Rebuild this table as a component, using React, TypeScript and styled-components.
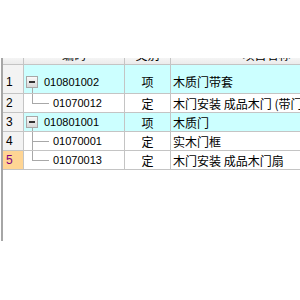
import styled, { createGlobalStyle } from "styled-components";

interface Item {
  code: string;
  kind: string;
  name: string;
  parent?: boolean;
  last?: boolean;
  tall?: boolean;
}

const rows: Item[] = [
  { code: "010801002", kind: "项", name: "木质门带套", parent: true, tall: true },
  { code: "01070012", kind: "定", name: "木门安装 成品木门 (带门套)", last: true },
  { code: "010801001", kind: "项", name: "木质门", parent: true },
  { code: "01070001", kind: "定", name: "实木门框" },
  { code: "01070013", kind: "定", name: "木门安装 成品木门扇", last: true },
];

const Global = createGlobalStyle`
  html, body {
    margin: 0;
    background: #ffffff;
  }
  body {
    font-family: "Liberation Sans", "Noto Sans CJK SC", sans-serif;
    font-size: 12px;
    color: #000;
  }
`;

const Page = styled.div`
  width: 300px;
  height: 300px;
  padding-top: 58px;
  box-sizing: border-box;
  overflow: hidden;
`;

const Grid = styled.div`
  margin-left: 1px;
  height: 183px;
  border-left: 2px solid #a6a6a6;
  width: 420px;
`;

const Row = styled.div<{ $h: number; $pad?: number }>`
  display: grid;
  grid-template-columns: 21px 101px 46px 192px;
  height: ${(p) => p.$h}px;
  & > * {
    padding-top: ${(p) => p.$pad ?? 0}px;
  }
`;

// header is scrolled up, only the bottom strip of it shows
const HeadCell = styled.div`
  background: linear-gradient(#f4f4f4, #ebebeb);
  border-right: 1px solid #c4c4c4;
  border-bottom: 1px solid #c4c4c4;
  overflow: hidden;
  text-align: center;
  font-family: "Noto Sans CJK SC", sans-serif;
  span {
    display: block;
    line-height: 14px;
    margin-top: -10px;
  }
`;

const NumCell = styled.div<{ $sel?: boolean }>`
  background: ${(p) => (p.$sel ? "#ffd594" : "#f3f3f3")};
  color: ${(p) => (p.$sel ? "#800080" : "#000")};
  border-right: 1px solid #c4c4c4;
  border-bottom: 1px solid #c4c4c4;
  display: flex;
  align-items: center;
  padding-left: 3px;
`;

const Cell = styled.div<{ $hi?: boolean; $center?: boolean }>`
  background: ${(p) => (p.$hi ? "#ccffff" : "#ffffff")};
  border-right: 1px solid #c4c4c4;
  border-bottom: 1px solid #c4c4c4;
  display: flex;
  align-items: center;
  justify-content: ${(p) => (p.$center ? "center" : "flex-start")};
  padding-left: ${(p) => (p.$center ? 0 : 2)}px;
  white-space: nowrap;
  overflow: hidden;
  font-family: "Noto Sans CJK SC", sans-serif;
`;

const CodeCell = styled(Cell)`
  align-items: stretch;
  padding-left: 2px;
  font-family: "Liberation Sans", sans-serif;
  font-size: 11px;
`;

const Code = styled.span`
  align-self: center;
`;

const Toggle = styled.div`
  position: relative;
  width: 18px;
  display: flex;
  align-items: center;
  &::after {
    content: "";
    position: absolute;
    left: 6px;
    top: calc(50% + 6px);
    bottom: -1px;
    border-left: 1px solid #a8a8a8;
  }
`;

const Box = styled.div`
  width: 10px;
  height: 10px;
  border: 1px solid #a8a8a8;
  background: linear-gradient(#fafafa, #d8d8d8);
  display: flex;
  align-items: center;
  justify-content: center;
  &::before {
    content: "";
    width: 6px;
    height: 2px;
    background: #333;
  }
`;

const Elbow = styled.div<{ $last?: boolean }>`
  position: relative;
  width: 21px;
  margin-left: 6px;
  &::before {
    content: "";
    position: absolute;
    left: 0;
    top: 0;
    height: ${(p) => (p.$last ? "50%" : "100%")};
    border-left: 1px solid #a8a8a8;
  }
  &::after {
    content: "";
    position: absolute;
    left: 0;
    top: 50%;
    width: 17px;
    border-top: 1px solid #a8a8a8;
  }
`;

export default function App() {
  return (
    <Page>
      <Global />
      <Grid>
        <Row $h={7}>
          <HeadCell />
          <HeadCell><span>编码</span></HeadCell>
          <HeadCell><span>类别</span></HeadCell>
          <HeadCell><span>项目名称</span></HeadCell>
        </Row>
        {rows.map((r, i) => (
          <Row key={r.code} $h={r.tall ? 29 : 19} $pad={r.tall ? 5 : 0}>
            <NumCell $sel={i === 4}>{i + 1}</NumCell>
            <CodeCell $hi={r.parent}>
              {r.parent ? (
                <Toggle>
                  <Box />
                </Toggle>
              ) : (
                <Elbow $last={r.last} />
              )}
              <Code>{r.code}</Code>
            </CodeCell>
            <Cell $hi={r.parent} $center>{r.kind}</Cell>
            <Cell $hi={r.parent}>{r.name}</Cell>
          </Row>
        ))}
      </Grid>
    </Page>
  );
}
